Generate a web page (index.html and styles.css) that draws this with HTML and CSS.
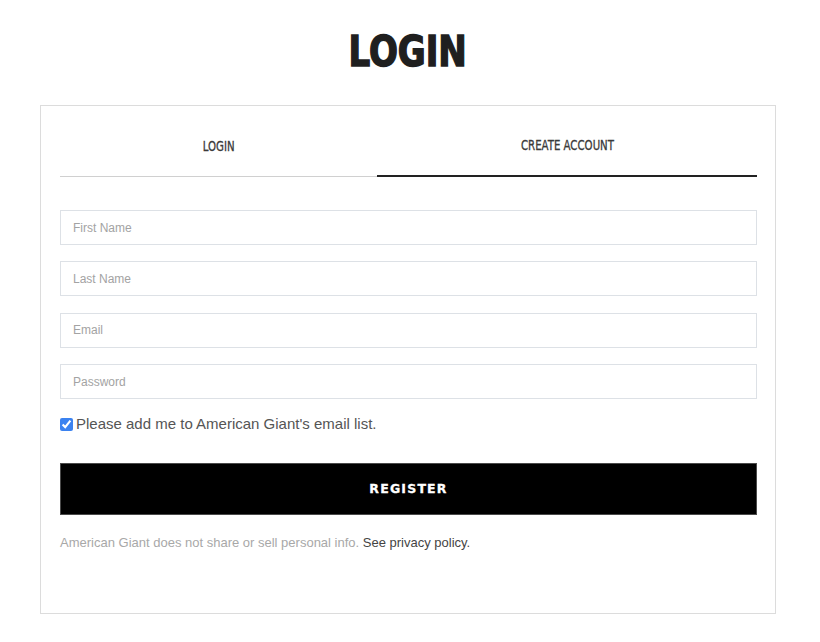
FILE: index.html
```html
<!DOCTYPE html>
<html lang="en">
<head>
<meta charset="utf-8">
<title>Login</title>
<link rel="stylesheet" href="styles.css">
</head>
<body>
<main class="page">
  <header class="title"><h1 class="title-text">LOGIN</h1></header>
  <section class="card">
    <nav class="tabs">
      <a class="tab" href="#"><span class="tab-label">LOGIN</span></a>
      <a class="tab tab-active" href="#"><span class="tab-label">CREATE ACCOUNT</span></a>
    </nav>
    <form class="form">
      <input class="field" type="text" placeholder="First Name">
      <input class="field" type="text" placeholder="Last Name">
      <input class="field" type="email" placeholder="Email">
      <input class="field" type="password" placeholder="Password">
      <label class="optin"><input class="check" type="checkbox" checked><span>Please add me to American Giant's email list.</span></label>
      <button class="register" type="button">REGISTER</button>
      <p class="note">American Giant does not share or sell personal info. <a class="note-link" href="#">See privacy policy.</a></p>
    </form>
  </section>
</main>
</body>
</html>
```
FILE: styles.css
```css
html, body {
  margin: 0;
  padding: 0;
  background: #ffffff;
}
body {
  font-family: "Liberation Sans", Arial, sans-serif;
  color: #333;
}
.page {
  padding: 0 44px 30px 40px;
}
.title {
  height: 105px;
  box-sizing: border-box;
  padding-top: 31px;
  text-align: center;
}
.title-text {
  margin: 0;
  display: inline-block;
  font-family: "DejaVu Sans Condensed", "DejaVu Sans", sans-serif;
  font-weight: bold;
  font-size: 42px;
  line-height: 1;
  color: #1f1f1f;
  -webkit-text-stroke: 1.4px #1f1f1f;
  transform: scaleX(0.9);
}
.card {
  border: 1px solid #dcdcdc;
  padding: 0 18px 62px 19px;
}
.tabs {
  display: grid;
  grid-template-columns: 317fr 380fr;
  align-items: end;
  height: 71px;
}
.tab {
  display: flex;
  align-items: center;
  justify-content: center;
  box-sizing: border-box;
  height: 71px;
  padding-top: 9px;
  border-bottom: 1px solid #d0d0d0;
  text-decoration: none;
  color: #3a3a3a;
}
.tab-active {
  border-bottom: 2px solid #222;
}
.tab-label {
  display: inline-block;
  font-family: "DejaVu Sans Condensed", "DejaVu Sans", sans-serif;
  font-size: 14px;
  -webkit-text-stroke: 0.3px #3a3a3a;
  transform: scaleX(0.81);
}
.form {
  display: flex;
  flex-direction: column;
  gap: 16.35px;
  padding-top: 33px;
}
.field {
  box-sizing: border-box;
  height: 35px;
  width: 100%;
  margin: 0;
  padding: 0 12px;
  border: 1px solid #dde1e6;
  border-radius: 0;
  font-family: "Liberation Sans", Arial, sans-serif;
  font-size: 12px;
  color: #333;
  outline: none;
}
.field::placeholder {
  color: #a3a3a3;
}
.optin {
  display: flex;
  align-items: center;
  gap: 3px;
  font-size: 15px;
  line-height: 18px;
  color: #555;
}
.check {
  width: 13px;
  height: 13px;
  margin: 0;
  accent-color: #3b82f0;
}
.register {
  margin-top: 13px;
  height: 52px;
  width: 100%;
  background: #000;
  border: 1px solid #4a4a4a;
  color: #fff;
  font-family: "DejaVu Sans", sans-serif;
  font-weight: bold;
  font-size: 12.5px;
  letter-spacing: 1.2px;
  -webkit-text-stroke: 0.3px #fff;
  cursor: pointer;
}
.note {
  margin: 4px 0 0 0;
  font-size: 13px;
  line-height: 16px;
  color: #a8a8a8;
}
.note-link {
  color: #444;
  text-decoration: none;
}
```
